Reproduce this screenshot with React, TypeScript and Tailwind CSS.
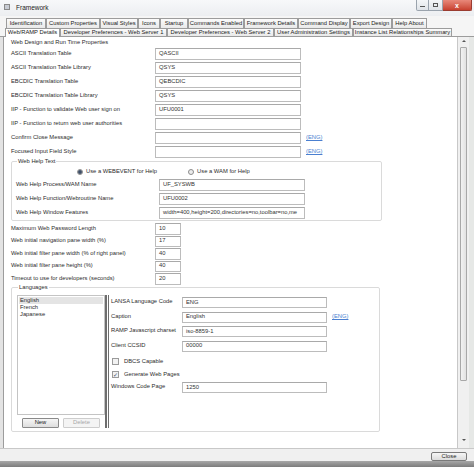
import React from "react";

const row1 = [
  { label: "Identification", w: 40 },
  { label: "Custom Properties", w: 54 },
  { label: "Visual Styles", w: 38 },
  { label: "Icons", w: 22 },
  { label: "Startup", w: 28 },
  { label: "Commands Enabled", w: 56 },
  { label: "Framework Details", w: 54 },
  { label: "Command Display", w: 52 },
  { label: "Export Design", w: 42 },
  { label: "Help About", w: 35 },
];

const row2 = [
  { label: "Web/RAMP Details", w: 55, active: true },
  { label: "Developer Preferences - Web Server 1", w: 107 },
  { label: "Developer Preferences - Web Server 2", w: 107 },
  { label: "User Administration Settings", w: 79 },
  { label: "Instance List Relationships Summary", w: 99 },
];

const topFields = [
  { label: "ASCII Translation Table", value: "QASCII" },
  { label: "ASCII Translation Table Library", value: "QSYS" },
  { label: "EBCDIC Translation Table", value: "QEBCDIC" },
  { label: "EBCDIC Translation Table Library", value: "QSYS" },
  { label: "IIP - Function to validate Web user sign on", value: "UFU0001" },
  { label: "IIP - Function to return web user authorities", value: "" },
  { label: "Confirm Close Message", value: "", eng: true },
  { label: "Focused Input Field Style", value: "", eng: true },
];

const helpFields = [
  { label: "Web Help Process/WAM Name", value: "UF_SYSWB" },
  { label: "Web Help Function/Webroutine Name", value: "UFU0002" },
  { label: "Web Help Window Features", value: "width=400,height=200,directories=no,toolbar=no,me" },
];

const smallFields = [
  { label: "Maximum Web Password Length", value: "10" },
  { label: "Web initial navigation pane width (%)", value: "17" },
  { label: "Web initial filter pane width (% of right panel)", value: "40" },
  { label: "Web initial filter pane height (%)", value: "40" },
  { label: "Timeout to use for developers (seconds)", value: "20" },
];

const langFields = [
  { label: "LANSA Language Code", value: "ENG" },
  { label: "Caption", value: "English", eng: true },
  { label: "RAMP Javascript charset", value: "iso-8859-1" },
  { label: "Client CCSID", value: "00000" },
];

function Box({ value, className }: { value: string; className: string }) {
  return (
    <div className={`flex items-center overflow-hidden whitespace-nowrap border border-[#bcbcbc] border-t-[#a9a9a9] bg-white pl-[3px] text-[#333] ${className}`}>
      {value}
    </div>
  );
}

function Eng() {
  return <span className="ml-[5px] text-[#4a7fd0] underline">(ENG)</span>;
}

function Radio({ checked, label }: { checked?: boolean; label: string }) {
  return (
    <div className="flex items-center gap-[3px]">
      <div className="flex h-[6px] w-[6px] items-center justify-center rounded-full border border-[#8c8c8c] bg-[#ececec]">
        {checked && <div className="h-[3.5px] w-[3.5px] rounded-full bg-[#3e4e66]" />}
      </div>
      <span>{label}</span>
    </div>
  );
}

function Check({ checked, label }: { checked?: boolean; label: string }) {
  return (
    <div className="flex items-center gap-[5px] pl-[1px]">
      <div className="flex h-[7px] w-[7px] items-center justify-center border border-[#9a9a9a] bg-[#f2f2f2] text-[6px] leading-none text-[#3c4c6c]">
        {checked ? "✓" : ""}
      </div>
      <span>{label}</span>
    </div>
  );
}

export default function App() {
  return (
    <div className="flex h-[467px] w-[474px] flex-col overflow-hidden bg-[#f0f0f0] font-['Liberation_Sans',Arial,sans-serif] text-[5.8px] leading-none text-[#2c2c2c]">
      {/* title bar */}
      <div className="flex h-[16px] items-start bg-gradient-to-b from-[#f7f8fa] to-[#eceef1]">
        <div className="mt-[4px] ml-[4px] h-[6px] w-[6px] border border-[#8a8a8a] bg-[#c8ccd4]" />
        <span className="mt-[5px] ml-[6px] text-[6.5px] text-[#222]">Framework</span>
        <div className="ml-auto mr-[2px] flex h-[11px]">
          <div className="flex w-[13px] items-end justify-center rounded-bl-[2px] border border-t-0 border-[#9aa3ad] bg-gradient-to-b from-[#f4f6f8] to-[#dfe3e8] pb-[3px]">
            <div className="h-[1px] w-[5px] bg-[#555]" />
          </div>
          <div className="flex w-[14px] items-center justify-center border border-t-0 border-l-0 border-[#9aa3ad] bg-gradient-to-b from-[#f4f6f8] to-[#dfe3e8]">
            <div className="h-[4px] w-[5px] border border-[#555]" />
          </div>
          <div className="flex w-[29px] items-center justify-center rounded-br-[2px] border border-t-0 border-l-0 border-[#9a3b30] bg-gradient-to-b from-[#e8887a] to-[#c7402f] text-[7px] font-bold text-white">
            x
          </div>
        </div>
      </div>

      {/* tabs */}
      <div className="flex h-[21px] flex-col bg-[#f5f5f5] pt-[2px]">
        <div className="flex h-[10px] pl-[6px]">
          {row1.map((t) => (
            <div key={t.label} style={{ width: t.w }} className="flex items-center justify-center whitespace-nowrap border border-b-0 border-[#9c9c9c] bg-gradient-to-b from-[#fbfbfb] to-[#e9e9e9] text-[#222]">
              {t.label}
            </div>
          ))}
        </div>
        <div className="flex h-[9px] border-b border-[#9c9c9c] pl-[5px]">
          {row2.map((t) => (
            <div
              key={t.label}
              style={{ width: t.w }}
              className={`flex items-center justify-center whitespace-nowrap border border-b-0 border-[#9c9c9c] text-[#222] ${t.active ? "-mb-px bg-white" : "bg-gradient-to-b from-[#fbfbfb] to-[#e9e9e9]"}`}
            >
              {t.label}
            </div>
          ))}
        </div>
      </div>

      {/* body */}
      <div className="flex h-[411px]">
        <div className="w-[4px] border-r border-[#9c9c9c] bg-[#e3e3e3]" />
        <div className="flex w-[454px] flex-col border-r border-[#c8c8c8] bg-white pl-[7px]">
          <div className="flex h-[11px] items-center">Web Design and Run Time Properties</div>

          {topFields.map((f, i) => (
            <div key={f.label} className={`flex items-start ${i === topFields.length - 1 ? "h-[12px]" : "h-[14px]"}`}>
              <div className="flex h-[12px] w-[144px] items-center">{f.label}</div>
              <Box value={f.value} className="h-[12px] w-[146px]" />
              {f.eng && <div className="flex h-[12px] items-center"><Eng /></div>}
            </div>
          ))}

          <fieldset className="w-[371px] rounded-[2px] border border-[#dadada] pl-[4px]">
            <legend className="ml-[1px] px-[1px] leading-[7px]">Web Help Text</legend>
            <div className="mt-[1px] flex h-[12px] items-center pl-[61px]">
              <Radio checked label="Use a WEBEVENT for Help" />
              <div className="ml-[31px]">
                <Radio label="Use a WAM for Help" />
              </div>
            </div>
            <div className="mt-[1px] flex flex-col">
              {helpFields.map((f, i) => (
                <div key={f.label} className={`flex items-start ${i === helpFields.length - 1 ? "h-[13px]" : "h-[14px]"}`}>
                  <div className="flex h-[12px] w-[143px] items-center">{f.label}</div>
                  <Box value={f.value} className="h-[12px] w-[146px]" />
                </div>
              ))}
            </div>
          </fieldset>

          <div className="mt-[2px] flex flex-col">
            {smallFields.map((f, i) => (
              <div key={f.label} className={`flex items-start ${i === smallFields.length - 1 ? "h-[11px]" : "h-[12.5px]"}`}>
                <div className="flex h-[11.5px] w-[144px] items-center">{f.label}</div>
                <Box value={f.value} className="h-[11.5px] w-[26px]" />
              </div>
            ))}
          </div>

          <fieldset className="w-[369px] rounded-[2px] border border-[#dadada] pl-[5px] pb-[3px]">
            <legend className="ml-[1px] px-[1px] leading-[7px]">Languages</legend>
            <div className="flex pt-[4px]">
              <div className="flex w-[88px] flex-col">
                <div className="flex h-[120px] flex-col border border-[#c4c4c4] bg-white p-[1px]">
                  <div className="flex h-[7px] items-center bg-[#e4e4e4] pl-[1px]">English</div>
                  <div className="flex h-[7px] items-center pl-[1px]">French</div>
                  <div className="flex h-[7px] items-center pl-[1px]">Japanese</div>
                </div>
                <div className="mt-[3px] flex h-[10px] gap-[4px] pl-[5px]">
                  <div className="flex w-[37px] items-center justify-center rounded-[1px] border border-[#8a8a8a] bg-gradient-to-b from-[#f6f6f6] to-[#dedede] text-[#222]">New</div>
                  <div className="flex w-[37px] items-center justify-center rounded-[1px] border border-[#cdcdcd] bg-[#f4f4f4] text-[#a8a8a8]">Delete</div>
                </div>
              </div>
              <div className="h-[133px] w-[4px] border-l-2 border-r border-[#6e6e6e]" />
              <div className="flex flex-col pl-[2px]">
                <div className="mt-[2px] flex flex-col">
                  {langFields.map((f) => (
                    <div key={f.label} className="flex h-[14.5px] items-start">
                      <div className="flex h-[10px] w-[71px] items-center">{f.label}</div>
                      <Box value={f.value} className="h-[11px] w-[145px]" />
                      {f.eng && <div className="flex h-[11px] items-center"><Eng /></div>}
                    </div>
                  ))}
                </div>
                <div className="flex h-[13px] items-center">
                  <Check label="DBCS Capable" />
                </div>
                <div className="flex h-[13px] items-center">
                  <Check checked label="Generate Web Pages" />
                </div>
                <div className="mt-[1px] flex h-[11px] items-start">
                  <div className="flex h-[10px] w-[71px] items-center">Windows Code Page</div>
                  <Box value="1250" className="h-[11px] w-[145px]" />
                </div>
              </div>
            </div>
          </fieldset>
        </div>

        {/* scrollbar */}
        <div className="flex w-[11px] flex-col items-center bg-[#f0f0f0] pt-[3px]">
          <div className="h-0 w-0 border-x-[2px] border-b-[2px] border-x-transparent border-b-[#555]" />
          <div className="mt-[5px] h-[334px] w-[7px] rounded-[1px] border border-[#a8a8a8] bg-gradient-to-r from-[#f2f2f2] to-[#e2e2e2]" />
          <div className="mt-[58px] h-0 w-0 border-x-[2px] border-t-[2px] border-x-transparent border-t-[#555]" />
        </div>
        <div className="w-[5px] bg-[#e6e8e6]" />
      </div>

      {/* bottom bar */}
      <div className="flex h-[13px] items-start justify-end border-t border-[#c8c8c8] bg-[#f0f0f0] pt-[3px] pr-[7px]">
        <div className="flex h-[9px] w-[36px] items-center justify-center rounded-[2px] border border-[#7a7a7a] bg-gradient-to-b from-[#f6f6f6] to-[#dcdcdc] text-[#222]">
          Close
        </div>
      </div>
      <div className="h-[6px] bg-gradient-to-b from-[#a8a8a8] to-[#7c7c7c]" />
    </div>
  );
}
